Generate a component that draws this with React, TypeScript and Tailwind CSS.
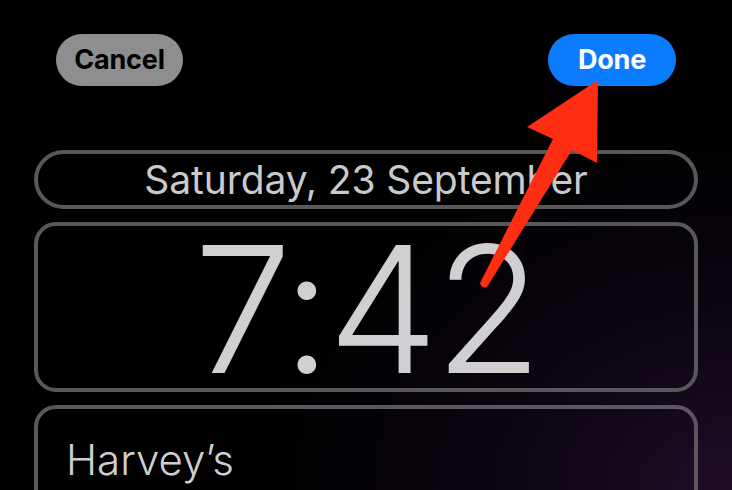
import React from 'react';

const Arrow: React.FC = () => (
  <svg className="absolute inset-0 pointer-events-none" width={732} height={490} viewBox="0 0 732 490">
    <path
      d="M598 80 L527 127 L553 139 L480 283 Q482 289 487 287 L572 150 L597 163 Z"
      fill="#ff2d12"
      strokeLinejoin="round"
    />
  </svg>
);

const App: React.FC = () => {
  return (
    <div className="relative w-[732px] h-[490px] overflow-hidden bg-black bg-[radial-gradient(ellipse_65%_75%_at_100%_100%,#1e0e26_0%,#0a040e_55%,#000_100%)] font-['Inter','Liberation_Sans',sans-serif]">
      {/* Top buttons */}
      <div className="flex justify-between px-[56px] pt-[34px]">
        <button className="w-[127px] h-[52px] rounded-full bg-[#8e8e90] text-black text-[27px] font-bold tracking-[-0.2px]">
          Cancel
        </button>
        <button className="w-[128px] h-[52px] rounded-full bg-[#0b7bff] text-white text-[27px] font-bold tracking-[-0.2px]">
          Done
        </button>
      </div>

      {/* Widgets */}
      <div className="flex flex-col px-[34px] pt-[64px] gap-[13px]">
        <div className="h-[59px] rounded-[30px] border-[4px] border-[#58585b] flex items-center justify-center">
          <span className="text-[39px] text-[#cacacc] leading-none tracking-[-0.1px]">Saturday, 23 September</span>
        </div>
        <div className="h-[170px] rounded-[22px] border-[4px] border-[#58585b] flex items-center justify-center">
          <span className="text-[176px] font-light text-[#d0d0d2] leading-none tracking-[-4px] mt-[4px]">7:42</span>
        </div>
        <div className="h-[120px] rounded-[22px] border-[4px] border-[#5a575e] px-[28px] pt-[30px]">
          <span className="text-[42px] font-light text-[#cfcfd1] leading-none">Harvey’s</span>
        </div>
      </div>

      <Arrow />
    </div>
  );
};

export default App;
